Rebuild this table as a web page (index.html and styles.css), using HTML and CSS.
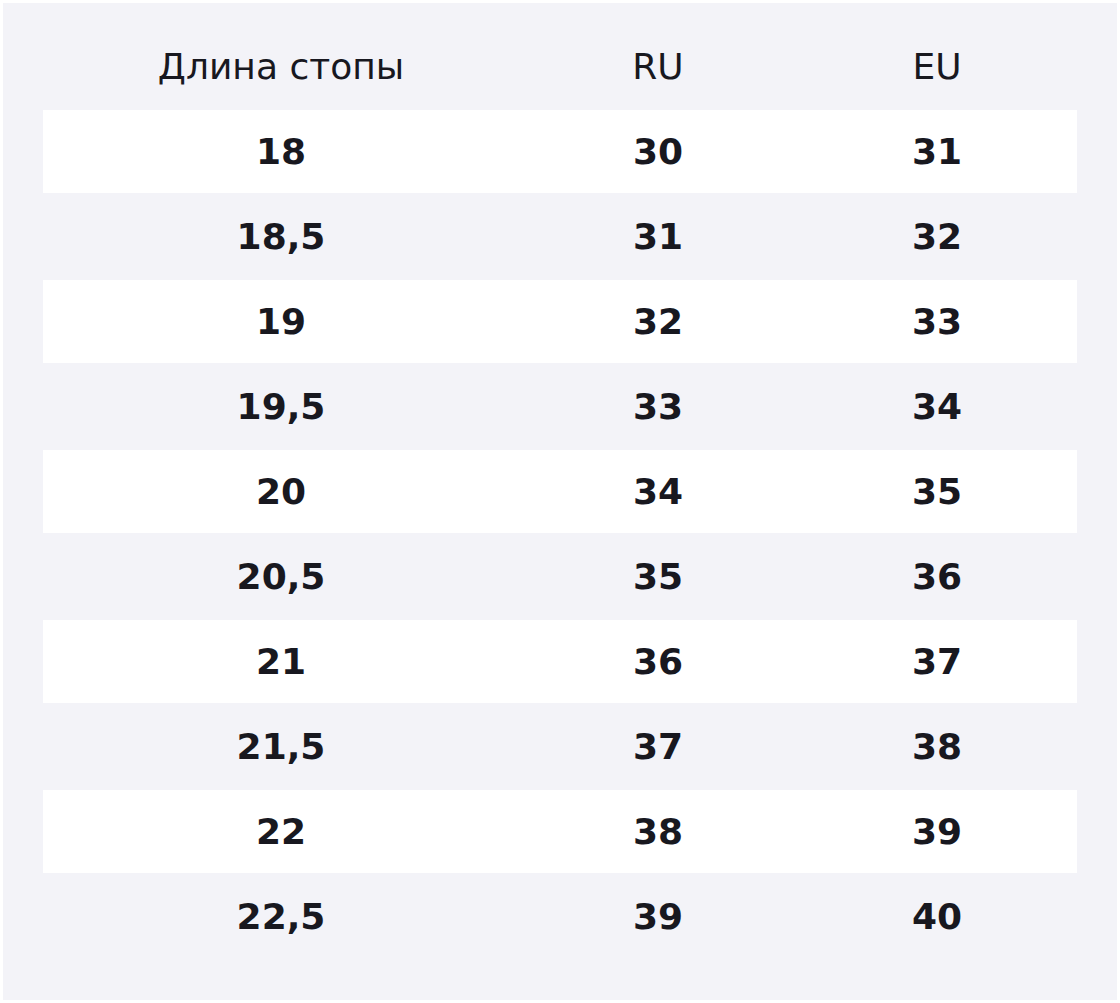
FILE: index.html
```html
<!DOCTYPE html>
<html lang="ru">
<head>
<meta charset="utf-8">
<title>Таблица размеров</title>
<link rel="stylesheet" href="styles.css">
</head>
<body>
<div class="chart">
  <div class="row head">
    <div class="cell">Длина стопы</div>
    <div class="cell">RU</div>
    <div class="cell">EU</div>
  </div>
  <div class="row light"><div class="cell">18</div><div class="cell">30</div><div class="cell">31</div></div>
  <div class="row"><div class="cell">18,5</div><div class="cell">31</div><div class="cell">32</div></div>
  <div class="row light"><div class="cell">19</div><div class="cell">32</div><div class="cell">33</div></div>
  <div class="row"><div class="cell">19,5</div><div class="cell">33</div><div class="cell">34</div></div>
  <div class="row light"><div class="cell">20</div><div class="cell">34</div><div class="cell">35</div></div>
  <div class="row"><div class="cell">20,5</div><div class="cell">35</div><div class="cell">36</div></div>
  <div class="row light"><div class="cell">21</div><div class="cell">36</div><div class="cell">37</div></div>
  <div class="row"><div class="cell">21,5</div><div class="cell">37</div><div class="cell">38</div></div>
  <div class="row light"><div class="cell">22</div><div class="cell">38</div><div class="cell">39</div></div>
  <div class="row"><div class="cell">22,5</div><div class="cell">39</div><div class="cell">40</div></div>
</div>
</body>
</html>
```

FILE: styles.css
```css
html, body {
  background: #ffffff;
}
body {
  margin: 3px;
  font-family: "DejaVu Sans", "Noto Sans", sans-serif;
  color: #18181f;
}
.chart {
  width: 1114px;
  height: 997px;
  box-sizing: border-box;
  padding: 40px 40px 42px;
  background: #f3f3f8;
}
.row {
  display: grid;
  grid-template-columns: 476px 278px 280px;
  height: 83px;
  margin-top: 2px;
  align-items: center;
  text-align: center;
  font-size: 36px;
  line-height: 42px;
  font-weight: 700;
}
.row.light {
  background: #ffffff;
}
.row.head {
  height: 65px;
  margin-top: 0;
  padding-top: 3px;
  box-sizing: border-box;
  align-items: start;
  font-weight: 400;
}
```
